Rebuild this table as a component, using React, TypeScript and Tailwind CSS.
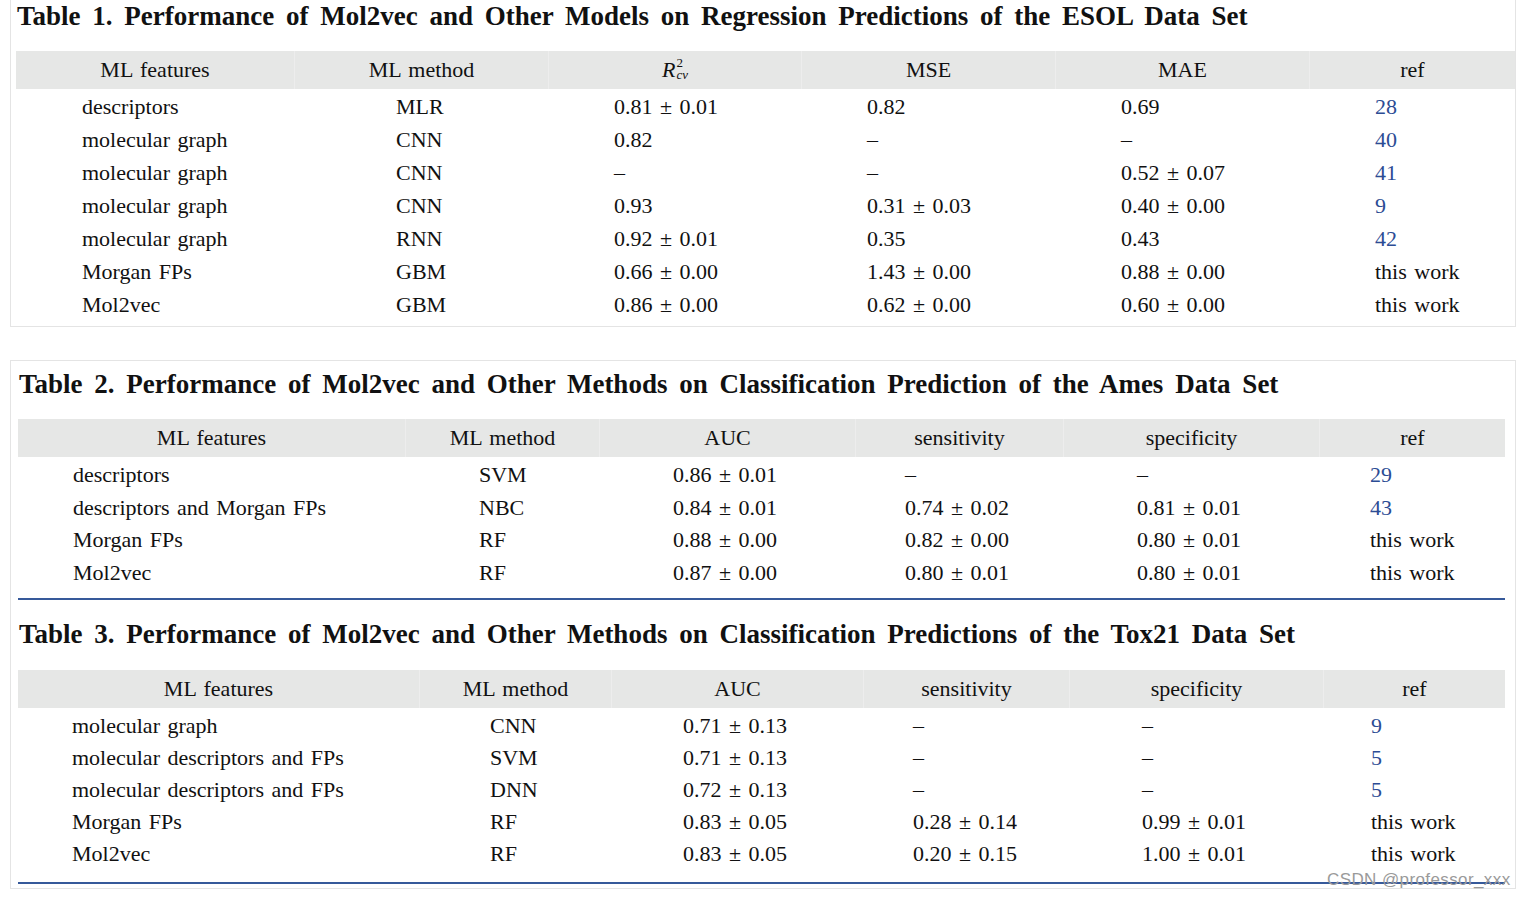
type Cell = string | { link: string };

type TableDef = {
  title: string;
  cols: string;
  headers: React.ReactNode[];
  pads: string[];
  rowH: string;
  rows: Cell[][];
};

const R2 = (
  <span className="inline-flex items-center">
    <span className="italic">R</span>
    <span className="ml-[1px] flex flex-col text-[13px] leading-[12px]">
      <span>2</span>
      <span className="italic">cv</span>
    </span>
  </span>
);

const table1: TableDef = {
  title:
    "Table 1. Performance of Mol2vec and Other Models on Regression Predictions of the ESOL Data Set",
  cols: "grid-cols-[278px_254px_253px_254px_254px_206px]",
  headers: ["ML features", "ML method", R2, "MSE", "MAE", "ref"],
  pads: ["pl-[66px]", "pl-[102px]", "pl-[66px]", "pl-[66px]", "pl-[66px]", "pl-[66px]"],
  rowH: "h-[33px]",
  rows: [
    ["descriptors", "MLR", "0.81 ± 0.01", "0.82", "0.69", { link: "28" }],
    ["molecular graph", "CNN", "0.82", "–", "–", { link: "40" }],
    ["molecular graph", "CNN", "–", "–", "0.52 ± 0.07", { link: "41" }],
    ["molecular graph", "CNN", "0.93", "0.31 ± 0.03", "0.40 ± 0.00", { link: "9" }],
    ["molecular graph", "RNN", "0.92 ± 0.01", "0.35", "0.43", { link: "42" }],
    ["Morgan FPs", "GBM", "0.66 ± 0.00", "1.43 ± 0.00", "0.88 ± 0.00", "this work"],
    ["Mol2vec", "GBM", "0.86 ± 0.00", "0.62 ± 0.00", "0.60 ± 0.00", "this work"],
  ],
};

const table2: TableDef = {
  title:
    "Table 2. Performance of Mol2vec and Other Methods on Classification Prediction of the Ames Data Set",
  cols: "grid-cols-[387px_194px_256px_208px_256px_186px]",
  headers: ["ML features", "ML method", "AUC", "sensitivity", "specificity", "ref"],
  pads: ["pl-[55px]", "pl-[74px]", "pl-[74px]", "pl-[50px]", "pl-[74px]", "pl-[51px]"],
  rowH: "h-[32.5px]",
  rows: [
    ["descriptors", "SVM", "0.86 ± 0.01", "–", "–", { link: "29" }],
    ["descriptors and Morgan FPs", "NBC", "0.84 ± 0.01", "0.74 ± 0.02", "0.81 ± 0.01", { link: "43" }],
    ["Morgan FPs", "RF", "0.88 ± 0.00", "0.82 ± 0.00", "0.80 ± 0.01", "this work"],
    ["Mol2vec", "RF", "0.87 ± 0.00", "0.80 ± 0.01", "0.80 ± 0.01", "this work"],
  ],
};

const table3: TableDef = {
  title:
    "Table 3. Performance of Mol2vec and Other Methods on Classification Predictions of the Tox21 Data Set",
  cols: "grid-cols-[401px_192px_252px_206px_254px_182px]",
  headers: ["ML features", "ML method", "AUC", "sensitivity", "specificity", "ref"],
  pads: ["pl-[54px]", "pl-[71px]", "pl-[72px]", "pl-[50px]", "pl-[73px]", "pl-[48px]"],
  rowH: "h-[32px]",
  rows: [
    ["molecular graph", "CNN", "0.71 ± 0.13", "–", "–", { link: "9" }],
    ["molecular descriptors and FPs", "SVM", "0.71 ± 0.13", "–", "–", { link: "5" }],
    ["molecular descriptors and FPs", "DNN", "0.72 ± 0.13", "–", "–", { link: "5" }],
    ["Morgan FPs", "RF", "0.83 ± 0.05", "0.28 ± 0.14", "0.99 ± 0.01", "this work"],
    ["Mol2vec", "RF", "0.83 ± 0.05", "0.20 ± 0.15", "1.00 ± 0.01", "this work"],
  ],
};

function Title({ text }: { text: string }) {
  return (
    <h2 className="h-[34px] pl-[6px] text-[27px] font-bold leading-[33px] [word-spacing:5px] whitespace-nowrap text-[#111]">
      {text}
    </h2>
  );
}

function DataTable({ t }: { t: TableDef }) {
  return (
    <div>
      {/* header band */}
      <div className={`grid ${t.cols} h-[38px] bg-[#e6e7e6]`}>
        {t.headers.map((h, i) => (
          <div
            key={i}
            className={
              i === 0
                ? "flex items-center justify-center pb-[2px]"
                : "flex items-center justify-center border-l border-[#ededed] pb-[2px]"
            }
          >
            {h}
          </div>
        ))}
      </div>
      {/* rows */}
      <div className="pt-[1px]">
        {t.rows.map((r, ri) => (
          <div key={ri} className={`grid ${t.cols} ${t.rowH}`}>
            {r.map((c, ci) => (
              <div key={ci} className={`flex items-center whitespace-nowrap ${t.pads[ci]}`}>
                {typeof c === "string" ? c : <a className="text-[#2c4c94]">{c.link}</a>}
              </div>
            ))}
          </div>
        ))}
      </div>
    </div>
  );
}

export default function App() {
  return (
    <div className="relative h-[900px] w-[1526px] overflow-hidden bg-white font-['Liberation_Serif',serif] text-[22px] text-[#111] [word-spacing:2px]">
      {/* Table 1 card */}
      <div className="ml-[10px] w-[1506px] border-x border-b border-[#e4e4e4] pb-[5px]">
        <Title text={table1.title} />
        <div className="ml-[5px] mt-[17px]">
          <DataTable t={table1} />
        </div>
      </div>

      {/* Table 2 + 3 card */}
      <div className="ml-[10px] mt-[33px] w-[1506px] border border-[#e4e4e4] pb-[4px]">
        <div className="pt-[7px] pl-[2px]">
          <Title text={table2.title} />
        </div>
        <div className="ml-[7px] mt-[17px] w-[1487px]">
          <DataTable t={table2} />
          <div className="mt-[10px] h-[2px] bg-[#36599a]" />
        </div>
        <div className="mt-[18px] pl-[2px]">
          <Title text={table3.title} />
        </div>
        <div className="ml-[7px] mt-[18px] w-[1487px]">
          <DataTable t={table3} />
          <div className="mt-[13px] h-[2px] bg-[#36599a]" />
        </div>
      </div>

      {/* watermark */}
      <div className="absolute left-[1327px] top-[869px] font-['Liberation_Sans',sans-serif] text-[17px] leading-[22px] tracking-[0.4px] text-[#9a9a9a] [word-spacing:0px]">
        CSDN @professor_xxx
      </div>
    </div>
  );
}
